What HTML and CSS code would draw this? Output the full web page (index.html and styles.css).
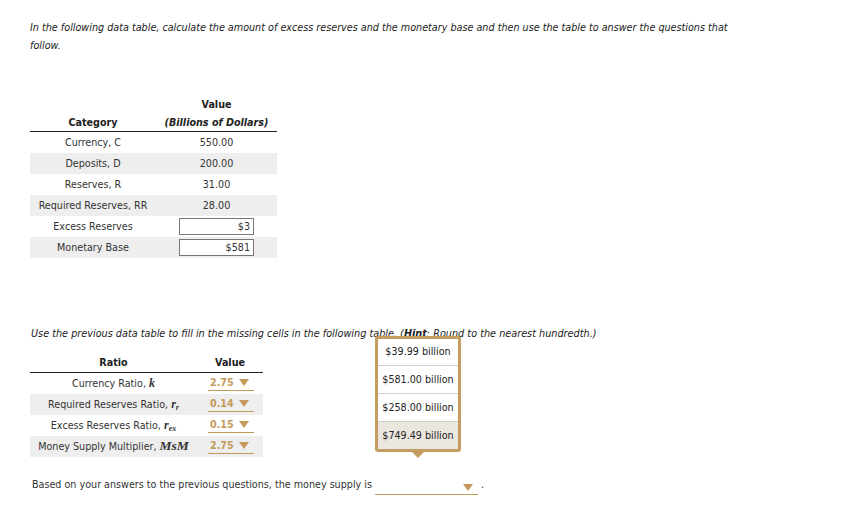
FILE: index.html
```html
<!DOCTYPE html>
<html>
<head>
<meta charset="utf-8">
<link rel="stylesheet" href="styles.css">
</head>
<body>
<div class="page">
  <p class="intro">In the following data table, calculate the amount of excess reserves and the monetary base and then use the table to answer the questions that follow.</p>

  <table class="t1">
    <thead>
      <tr class="h1"><th></th><th>Value</th></tr>
      <tr class="h2"><th>Category</th><th><i>(Billions of Dollars)</i></th></tr>
    </thead>
    <tbody>
      <tr><td>Currency, C</td><td>550.00</td></tr>
      <tr class="alt"><td>Deposits, D</td><td>200.00</td></tr>
      <tr><td>Reserves, R</td><td>31.00</td></tr>
      <tr class="alt"><td>Required Reserves, RR</td><td>28.00</td></tr>
      <tr><td>Excess Reserves</td><td><span class="box">$3</span></td></tr>
      <tr class="alt"><td>Monetary Base</td><td><span class="box">$581</span></td></tr>
    </tbody>
  </table>

  <p class="q2">Use the previous data table to fill in the missing cells in the following table. (<b>Hint</b>: Round to the nearest hundredth.)</p>

  <table class="t2">
    <thead>
      <tr><th class="c1">Ratio</th><th class="c2">Value</th></tr>
    </thead>
    <tbody>
      <tr><td>Currency Ratio, <span class="m">k</span></td><td><span class="dd">2.75<span class="tri"></span></span></td></tr>
      <tr class="alt"><td>Required Reserves Ratio, <span class="m">r<sub>r</sub></span></td><td><span class="dd">0.14<span class="tri"></span></span></td></tr>
      <tr><td>Excess Reserves Ratio, <span class="m">r<sub>ex</sub></span></td><td><span class="dd">0.15<span class="tri"></span></span></td></tr>
      <tr class="alt"><td>Money Supply Multiplier, <span class="m big">MsM</span></td><td><span class="dd">2.75<span class="tri"></span></span></td></tr>
    </tbody>
  </table>

  <p class="last">Based on your answers to the previous questions, the money supply is <span class="dd wide"><span class="tri"></span></span> .</p>

  <div class="popup">
    <div class="opt first">$39.99 billion</div>
    <div class="opt">$581.00 billion</div>
    <div class="opt">$258.00 billion</div>
    <div class="opt sel">$749.49 billion</div>
    <span class="caret"></span>
  </div>
</div>
</body>
</html>
```

FILE: styles.css
```css
html, body {
  margin: 0;
  padding: 0;
  background: #fff;
}
body {
  font-family: "DejaVu Sans", Verdana, sans-serif;
  font-size: 9.6px;
  color: #222;
}
.page {
  position: relative;
  padding: 19px 0 0 30px;
  width: 819px;
  height: 488px;
}
.intro {
  margin: 0;
  width: 720px;
  font-style: italic;
  line-height: 18px;
  font-size: 9.65px;
}
.t1 {
  margin-top: 40px;
  border-collapse: collapse;
  width: 247px;
}
.t1 th, .t1 td {
  padding: 0;
  text-align: center;
}
.t1 th:first-child, .t1 td:first-child { width: 126px; }
.t1 .h1 th { height: 18px; font-weight: bold; }
.t1 .h2 th { height: 17px; border-bottom: 1px solid #222; vertical-align: middle; padding-top: 1px; }
.t1 .h2 th i { font-style: italic; }
.t1 td { height: 21px; color: #333; }
.alt td { background: #eeeeee; }
.box {
  display: inline-block;
  box-sizing: border-box;
  width: 75px;
  height: 17px;
  line-height: 15px;
  border: 1px solid #777;
  background: #fff;
  text-align: right;
  padding-right: 3px;
  vertical-align: middle;
}
.q2 {
  margin: 68px 0 0 1px;
  font-style: italic;
  font-size: 9.7px;
  line-height: 16px;
}
.t2 {
  margin-top: 11px;
  border-collapse: collapse;
  width: 233px;
}
.t2 th, .t2 td { padding: 0; text-align: center; }
.t2 th { height: 19px; border-bottom: 1px solid #222; vertical-align: middle; }
.t2 .c1 { width: 167px; }
.t2 td { height: 21px; color: #333; }
.m {
  font-family: "Liberation Serif", "DejaVu Serif", serif;
  font-style: italic;
  font-size: 12px;
  font-weight: bold;
  line-height: 10px;
}
.m sub { font-size: 8px; vertical-align: -2px; line-height: 0; }
.m.big { font-size: 13.5px; }
.dd {
  display: inline-block;
  box-sizing: border-box;
  width: 46px;
  border-bottom: 1px solid #c39a5c;
  color: #c39a5c;
  font-weight: bold;
  text-align: left;
  padding-left: 2px;
  line-height: 14px;
  position: relative;
  left: 1px;
}
.tri {
  display: inline-block;
  width: 0;
  height: 0;
  margin-left: 5px;
  border-left: 5px solid transparent;
  border-right: 5px solid transparent;
  border-top: 7px solid #c39a5c;
  vertical-align: 0px;
}
.last {
  margin: 20px 0 0 2px;
  line-height: 16px;
  color: #333;
}
.dd.wide {
  width: 103px;
  height: 14px;
  text-align: right;
  padding-right: 5px;
  left: 0;
  vertical-align: -3px;
}
.popup {
  position: absolute;
  left: 375px;
  top: 336px;
  width: 86px;
  box-sizing: border-box;
  border: 3px solid #c69d60;
  border-radius: 3px;
  background: #fff;
}
.opt {
  height: 27px;
  line-height: 27px;
  text-align: center;
  border-top: 1px solid #d4d0cb;
  color: #222;
}
.opt.first { border-top: none; height: 26px; line-height: 26px; }
.opt.sel { background: #ebe7df; }
.caret {
  position: absolute;
  left: 34px;
  bottom: -9px;
  width: 0;
  height: 0;
  border-left: 6px solid transparent;
  border-right: 6px solid transparent;
  border-top: 6px solid #c69d60;
}
```
